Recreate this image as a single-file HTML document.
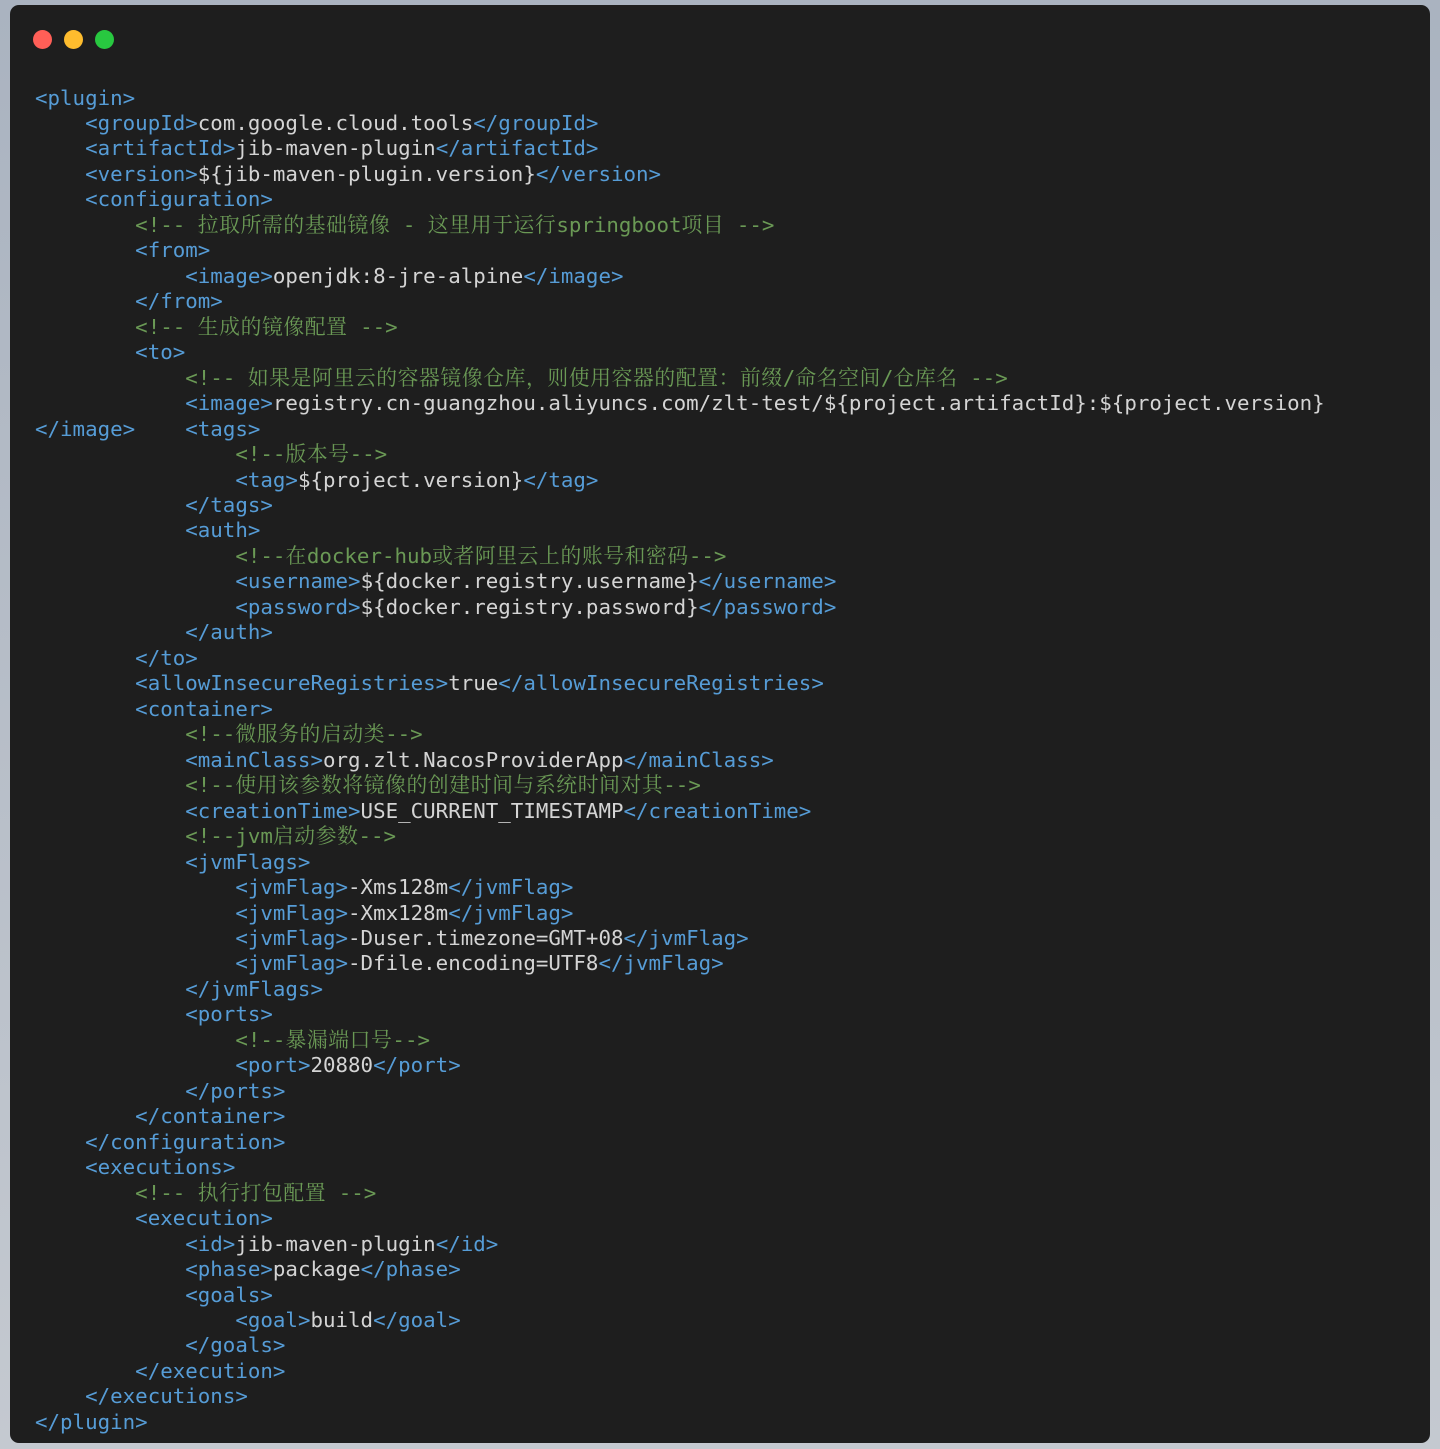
<!DOCTYPE html>
<html><head><meta charset="utf-8"><style>
html,body{margin:0;padding:0;}
body{width:1440px;height:1449px;background:linear-gradient(180deg,#aab3c0,#c4c9d0);position:relative;overflow:hidden;}
.win{position:absolute;left:10px;top:5px;width:1420px;height:1438px;background:#1e1e1e;border-radius:9px;}
.dot{position:absolute;top:25px;width:19px;height:19px;border-radius:50%;}
pre{position:absolute;left:25px;top:80.5px;margin:0;font-family:"DejaVu Sans Mono",monospace;font-size:20.8px;line-height:25.47px;color:#d4d4d4;white-space:pre;}
.t{color:#569cd6}.c{color:#6a9955}
.z{font-family:"Noto Serif CJK SC",serif;letter-spacing:0.6px;line-height:0;}
</style></head><body><div class="win">
<div class="dot" style="left:22.5px;background:#ff5f57"></div>
<div class="dot" style="left:53.5px;background:#febc2e"></div>
<div class="dot" style="left:84.5px;background:#28c840"></div>
<pre><span class="t">&lt;plugin&gt;</span>
    <span class="t">&lt;groupId&gt;</span>com.google.cloud.tools<span class="t">&lt;/groupId&gt;</span>
    <span class="t">&lt;artifactId&gt;</span>jib-maven-plugin<span class="t">&lt;/artifactId&gt;</span>
    <span class="t">&lt;version&gt;</span>${jib-maven-plugin.version}<span class="t">&lt;/version&gt;</span>
    <span class="t">&lt;configuration&gt;</span>
        <span class="c">&lt;!-- <span class="z">拉取所需的基础镜像</span> - <span class="z">这里用于运行</span>springboot<span class="z">项目</span> --&gt;</span>
        <span class="t">&lt;from&gt;</span>
            <span class="t">&lt;image&gt;</span>openjdk:8-jre-alpine<span class="t">&lt;/image&gt;</span>
        <span class="t">&lt;/from&gt;</span>
        <span class="c">&lt;!-- <span class="z">生成的镜像配置</span> --&gt;</span>
        <span class="t">&lt;to&gt;</span>
            <span class="c">&lt;!-- <span class="z">如果是阿里云的容器镜像仓库，则使用容器的配置：前缀</span>/<span class="z">命名空间</span>/<span class="z">仓库名</span> --&gt;</span>
            <span class="t">&lt;image&gt;</span>registry.cn-guangzhou.aliyuncs.com/zlt-test/${project.artifactId}:${project.version}
<span class="t">&lt;/image&gt;</span>    <span class="t">&lt;tags&gt;</span>
                <span class="c">&lt;!--<span class="z">版本号</span>--&gt;</span>
                <span class="t">&lt;tag&gt;</span>${project.version}<span class="t">&lt;/tag&gt;</span>
            <span class="t">&lt;/tags&gt;</span>
            <span class="t">&lt;auth&gt;</span>
                <span class="c">&lt;!--<span class="z">在</span>docker-hub<span class="z">或者阿里云上的账号和密码</span>--&gt;</span>
                <span class="t">&lt;username&gt;</span>${docker.registry.username}<span class="t">&lt;/username&gt;</span>
                <span class="t">&lt;password&gt;</span>${docker.registry.password}<span class="t">&lt;/password&gt;</span>
            <span class="t">&lt;/auth&gt;</span>
        <span class="t">&lt;/to&gt;</span>
        <span class="t">&lt;allowInsecureRegistries&gt;</span>true<span class="t">&lt;/allowInsecureRegistries&gt;</span>
        <span class="t">&lt;container&gt;</span>
            <span class="c">&lt;!--<span class="z">微服务的启动类</span>--&gt;</span>
            <span class="t">&lt;mainClass&gt;</span>org.zlt.NacosProviderApp<span class="t">&lt;/mainClass&gt;</span>
            <span class="c">&lt;!--<span class="z">使用该参数将镜像的创建时间与系统时间对其</span>--&gt;</span>
            <span class="t">&lt;creationTime&gt;</span>USE_CURRENT_TIMESTAMP<span class="t">&lt;/creationTime&gt;</span>
            <span class="c">&lt;!--jvm<span class="z">启动参数</span>--&gt;</span>
            <span class="t">&lt;jvmFlags&gt;</span>
                <span class="t">&lt;jvmFlag&gt;</span>-Xms128m<span class="t">&lt;/jvmFlag&gt;</span>
                <span class="t">&lt;jvmFlag&gt;</span>-Xmx128m<span class="t">&lt;/jvmFlag&gt;</span>
                <span class="t">&lt;jvmFlag&gt;</span>-Duser.timezone=GMT+08<span class="t">&lt;/jvmFlag&gt;</span>
                <span class="t">&lt;jvmFlag&gt;</span>-Dfile.encoding=UTF8<span class="t">&lt;/jvmFlag&gt;</span>
            <span class="t">&lt;/jvmFlags&gt;</span>
            <span class="t">&lt;ports&gt;</span>
                <span class="c">&lt;!--<span class="z">暴漏端口号</span>--&gt;</span>
                <span class="t">&lt;port&gt;</span>20880<span class="t">&lt;/port&gt;</span>
            <span class="t">&lt;/ports&gt;</span>
        <span class="t">&lt;/container&gt;</span>
    <span class="t">&lt;/configuration&gt;</span>
    <span class="t">&lt;executions&gt;</span>
        <span class="c">&lt;!-- <span class="z">执行打包配置</span> --&gt;</span>
        <span class="t">&lt;execution&gt;</span>
            <span class="t">&lt;id&gt;</span>jib-maven-plugin<span class="t">&lt;/id&gt;</span>
            <span class="t">&lt;phase&gt;</span>package<span class="t">&lt;/phase&gt;</span>
            <span class="t">&lt;goals&gt;</span>
                <span class="t">&lt;goal&gt;</span>build<span class="t">&lt;/goal&gt;</span>
            <span class="t">&lt;/goals&gt;</span>
        <span class="t">&lt;/execution&gt;</span>
    <span class="t">&lt;/executions&gt;</span>
<span class="t">&lt;/plugin&gt;</span></pre>
</div></body></html>
